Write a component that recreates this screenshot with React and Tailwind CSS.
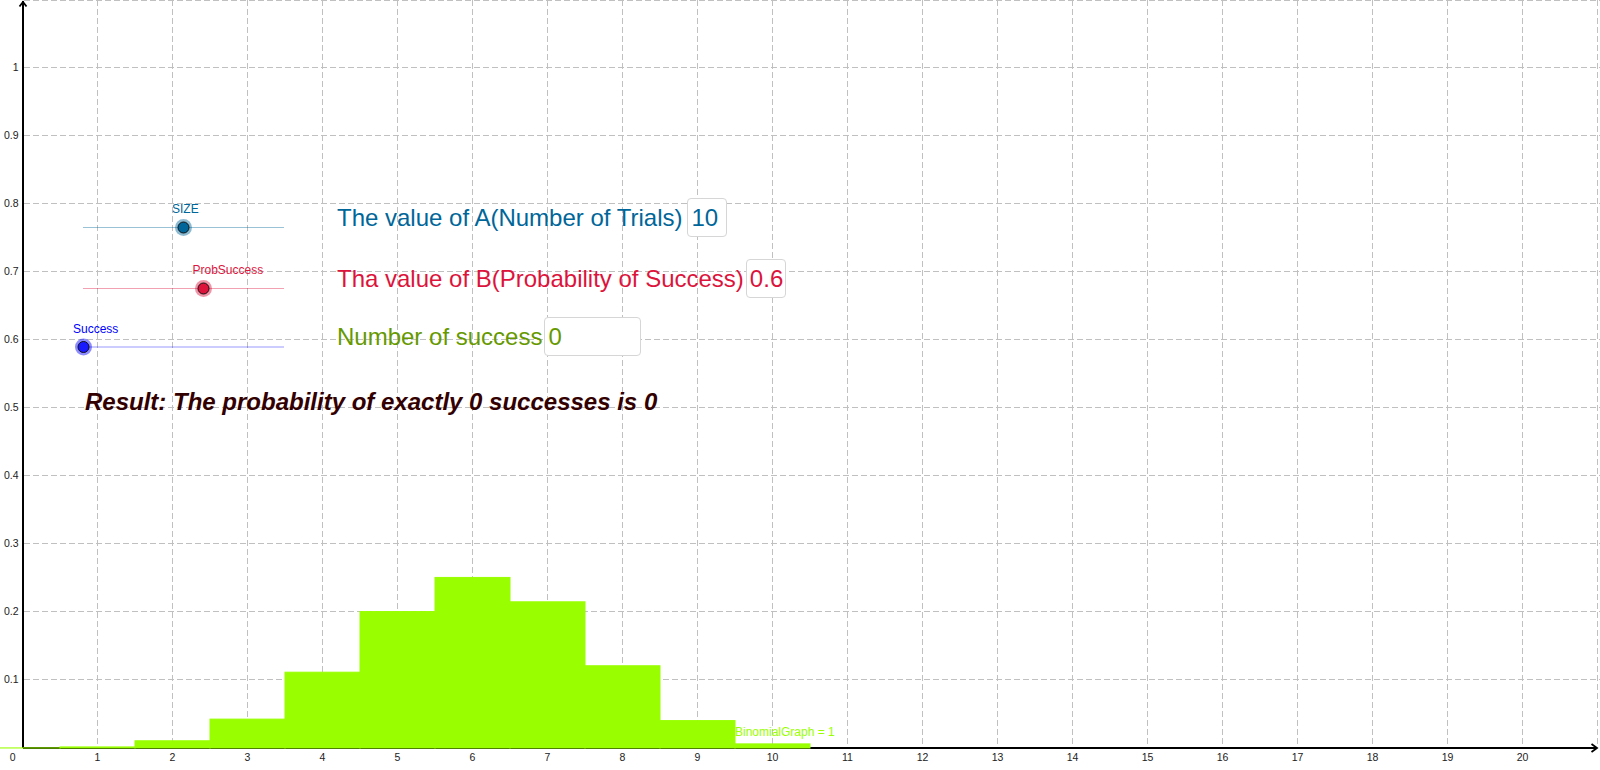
import React from "react";

const X = (k) => 22.5 + 75 * k;
const Y = (v) => 748 - 680 * v;

function binom(n, p, k) {
  let c = 1;
  for (let i = 0; i < k; i++) c = (c * (n - i)) / (i + 1);
  return c * Math.pow(p, k) * Math.pow(1 - p, n - k);
}

const probs = Array.from({ length: 11 }, (_, k) => binom(10, 0.6, k));

const sliders = [
  { name: "SIZE", y: 227.5, frac: 0.5, color: "#006699", knob: "#006699", labelX: 172, labelY: 212.5 },
  { name: "ProbSuccess", y: 288.5, frac: 0.6, color: "#dc143c", knob: "#dc143c", labelX: 192.5, labelY: 273.5 },
  { name: "Success", y: 347, frac: 0, color: "#0000ff", knob: "#1a1aff", labelX: 73, labelY: 332.5 },
];

function Graph() {
  const vlines = Array.from({ length: 21 }, (_, i) => i + 1);
  const hlines = Array.from({ length: 10 }, (_, i) => i + 1);
  return (
    <svg width="1600" height="770" className="block">
      {/* grid */}
      {vlines.map((k) => (
        <line key={"v" + k} x1={X(k)} x2={X(k)} y1={0} y2={747} stroke="#c0c0c0" strokeWidth="1" strokeDasharray="6 3" />
      ))}
      {hlines.map((j) => (
        <line key={"h" + j} x1={24} x2={1600} y1={747.5 - 68 * j} y2={747.5 - 68 * j} stroke="#c0c0c0" strokeWidth="1" strokeDasharray="6 3" />
      ))}
      <line x1={24} x2={1600} y1={0.5} y2={0.5} stroke="#c0c0c0" strokeWidth="1" strokeDasharray="6 3" />

      {/* axes */}
      <line x1={23} x2={1597} y1={748} y2={748} stroke="#000" strokeWidth="2" />
      <line x1={23} x2={23} y1={1} y2={748} stroke="#000" strokeWidth="2" />
      <polyline points="19.5,6.5 23,2 26.5,6.5" fill="none" stroke="#000" strokeWidth="1.8" />
      <polyline points="1591.5,744 1597,748 1591.5,752" fill="none" stroke="#000" strokeWidth="1.8" />

      {/* histogram */}
      {probs.map((p, k) => {
        const top = Y(p);
        return (
          <rect
            key={"b" + k}
            x={X(k - 0.5)}
            y={top}
            width={75}
            height={748 - top}
            fill="#99ff00"
            stroke="#99ff00"
            strokeWidth="1"
          />
        );
      })}
      <text x={735} y={735.5} fontSize="12" fill="#99ff00">BinomialGraph = 1</text>

      {/* tick labels */}
      <text x={12.7} y={761} fontSize="10.5" fill="#222" textAnchor="middle">0</text>
      {Array.from({ length: 20 }, (_, i) => i + 1).map((k) => (
        <text key={"tx" + k} x={X(k)} y={761} fontSize="10.5" fill="#222" textAnchor="middle">{k}</text>
      ))}
      {hlines.map((j) => (
        <text key={"ty" + j} x={18.5} y={747.5 - 68 * j + 3.8} fontSize="10.5" fill="#222" textAnchor="end">
          {j === 10 ? "1" : "0." + j}
        </text>
      ))}

      {/* sliders */}
      {sliders.map((s) => {
        const kx = 83.5 + 200 * s.frac;
        return (
          <g key={s.name}>
            <line x1={83} x2={284} y1={s.y} y2={s.y} stroke={s.color} strokeOpacity="0.4" strokeWidth="1.2" />
            <circle cx={kx} cy={s.y} r={8.5} fill={s.color} fillOpacity="0.45" />
            <circle cx={kx} cy={s.y} r={5.5} fill={s.knob} stroke="#111" strokeWidth="1" />
            <text x={s.labelX} y={s.labelY} fontSize="12" fill={s.color}>{s.name}</text>
          </g>
        );
      })}
    </svg>
  );
}

function Row({ top, color, label, value, boxW, gap }) {
  return (
    <div
      className="absolute left-[337px] flex h-[39px] items-center text-[24px] leading-none"
      style={{ top, color }}
    >
      <span className="whitespace-nowrap">{label}</span>
      <div
        className="flex h-[39px] items-center rounded-[4px] border border-[#d6d6d6] bg-white pl-[3px]"
        style={{ width: boxW, marginLeft: gap }}
      >
        {value}
      </div>
    </div>
  );
}

export default function App() {
  return (
    <div className="relative h-[770px] w-[1600px] overflow-hidden bg-white font-['Liberation_Sans',Arial,sans-serif]">
      <Graph />
      <Row top={198} color="#006699" label="The value of A(Number of Trials)" value="10" boxW={40} gap={5} />
      <Row top={259} color="#dc143c" label="Tha value of B(Probability of Success)" value="0.6" boxW={40} gap={2} />
      <Row top={317} color="#669900" label="Number of success" value="0" boxW={97} gap={2} />
      <div className="absolute left-[85px] top-[390px] whitespace-nowrap text-[24px] font-bold italic leading-none text-[#330000]">
        Result: The probability of exactly 0 successes is 0
      </div>
    </div>
  );
}
